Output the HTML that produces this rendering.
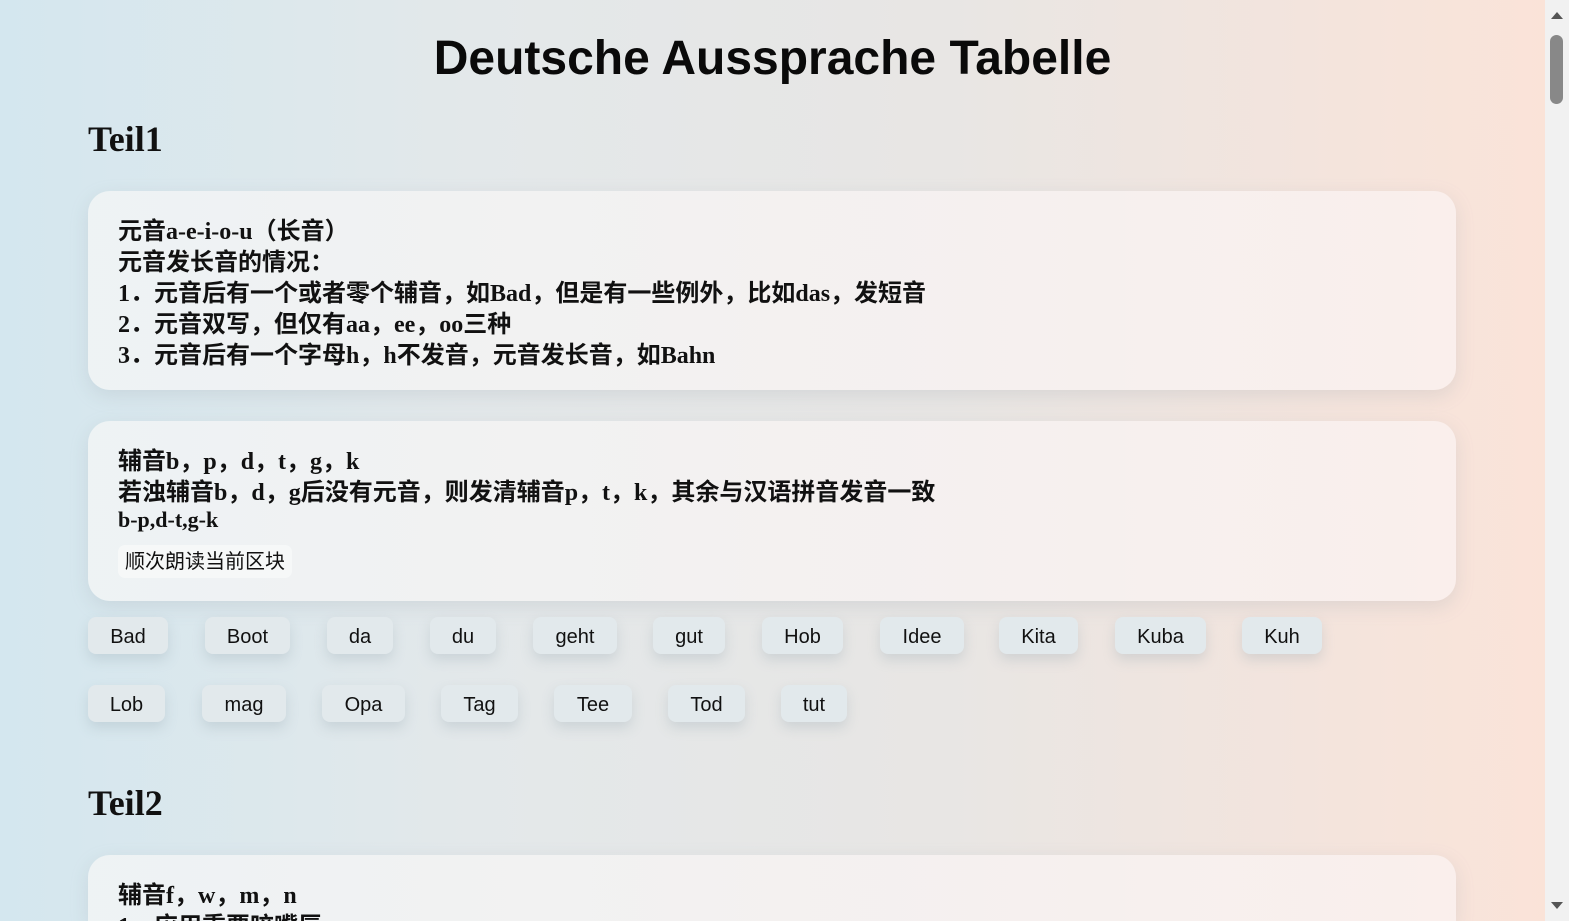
<!DOCTYPE html>
<html><head><meta charset="utf-8"><style>
*{margin:0;padding:0;box-sizing:border-box}
html,body{width:1569px;height:921px;overflow:hidden}
body{position:relative;background:linear-gradient(90deg,#d4e7ef 0%,#e3e8ea 30%,#e8e6e4 60%,#fbe3d8 100%);font-family:"Liberation Serif","Noto Sans CJK SC",serif;color:#111}
h1{position:absolute;left:0;width:1545px;top:31px;text-align:center;font:bold 48px "Liberation Sans",sans-serif;color:#0a0a0a}
h2{position:absolute;left:88px;font:bold 36px "Liberation Serif",serif}
.card{position:absolute;left:88px;width:1368px;border-radius:22px;background:linear-gradient(90deg,rgba(240,244,245,.9),rgba(250,240,238,.9));box-shadow:0 6px 18px rgba(150,160,170,.22);padding:26px 30px;font-weight:bold;font-size:24px;line-height:31px;overflow:hidden}
.btn{position:absolute;left:118px;top:545px;width:174px;height:33px;border-radius:7px;background:#f6f8f8;font:20px "Liberation Sans","Noto Sans CJK SC",sans-serif;line-height:35px;text-align:center;color:#111}
.w{position:absolute;height:37px;border-radius:8px;background:#e2e9ec;box-shadow:0 6px 12px rgba(150,165,175,.3);font:20px "Liberation Sans",sans-serif;line-height:40px;text-align:center;color:#111}
.sb{position:absolute;left:1545px;top:0;width:24px;height:921px;background:#f1f1f1}
.th{position:absolute;left:5px;top:35px;width:13px;height:69px;border-radius:7px;background:#888}
</style></head><body>
<h1>Deutsche Aussprache Tabelle</h1>
<h2 style="top:118px">Teil1</h2>
<div class="card" style="top:191px;height:199px">元音a-e-i-o-u（长音）<br>元音发长音的情况：<br>1．元音后有一个或者零个辅音，如Bad，但是有一些例外，比如das，发短音<br>2．元音双写，但仅有aa，ee，oo三种<br>3．元音后有一个字母h，h不发音，元音发长音，如Bahn</div>
<div class="card" style="top:421px;height:180px">辅音b，p，d，t，g，k<br>若浊辅音b，d，g后没有元音，则发清辅音p，t，k，其余与汉语拼音发音一致<br><span style="font-size:22px;line-height:24px;display:block;margin-top:-1px">b-p,d-t,g-k</span></div>
<div class="btn">顺次朗读当前区块</div>
<div class="w" style="top:617px;left:88px;width:80px">Bad</div>
<div class="w" style="top:617px;left:205px;width:85px">Boot</div>
<div class="w" style="top:617px;left:327px;width:66px">da</div>
<div class="w" style="top:617px;left:430px;width:66px">du</div>
<div class="w" style="top:617px;left:533px;width:84px">geht</div>
<div class="w" style="top:617px;left:653px;width:72px">gut</div>
<div class="w" style="top:617px;left:762px;width:81px">Hob</div>
<div class="w" style="top:617px;left:880px;width:84px">Idee</div>
<div class="w" style="top:617px;left:999px;width:79px">Kita</div>
<div class="w" style="top:617px;left:1115px;width:91px">Kuba</div>
<div class="w" style="top:617px;left:1242px;width:80px">Kuh</div>
<div class="w" style="top:685px;left:88px;width:77px">Lob</div>
<div class="w" style="top:685px;left:202px;width:84px">mag</div>
<div class="w" style="top:685px;left:322px;width:83px">Opa</div>
<div class="w" style="top:685px;left:441px;width:77px">Tag</div>
<div class="w" style="top:685px;left:554px;width:78px">Tee</div>
<div class="w" style="top:685px;left:668px;width:77px">Tod</div>
<div class="w" style="top:685px;left:781px;width:66px">tut</div>
<h2 style="top:782px">Teil2</h2>
<div class="card" style="top:855px;height:66px;border-bottom-left-radius:0;border-bottom-right-radius:0">辅音f，w，m，n<br>1．应用重要咬嘴唇</div>
<div class="sb"><div class="th"></div><div style="position:absolute;left:6px;top:12px;border:6px solid transparent;border-bottom:7px solid #555;border-top:0"></div><div style="position:absolute;left:6px;top:902px;border:6px solid transparent;border-top:7px solid #555;border-bottom:0"></div></div>
</body></html>
